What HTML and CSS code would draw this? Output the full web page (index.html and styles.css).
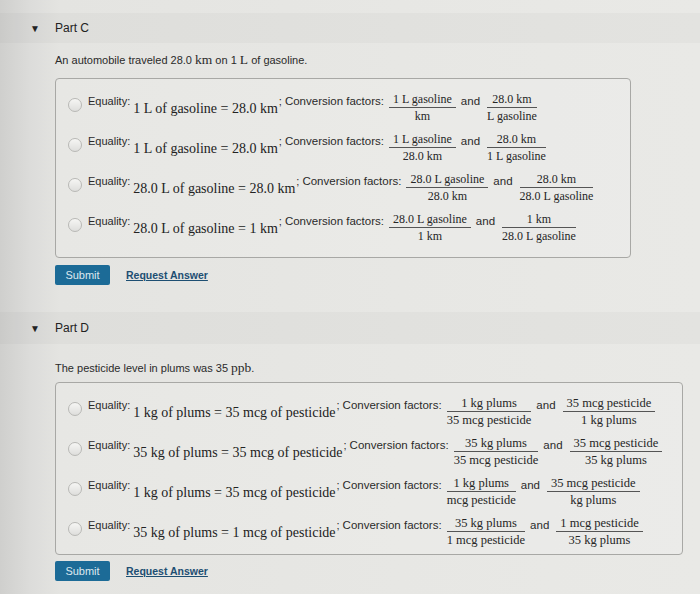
FILE: index.html
```html
<!DOCTYPE html>
<html>
<head>
<meta charset="utf-8">
<link rel="stylesheet" href="styles.css">
</head>
<body>
<div class="page">
  <div class="part-head"><span class="caret">&#9660;</span><span class="part-title">Part C</span></div>
  <p class="prompt">An automobile traveled 28.0 <span class="m">km</span> on 1 <span class="m">L</span> of gasoline.</p>
  <div class="box box-c">
    <div class="row">
      <span class="radio"></span><span class="lbl">Equality:</span><span class="math">1 L of gasoline = 28.0 km</span><span class="semi">;</span><span class="lbl cf">Conversion factors:</span>
      <span class="frac"><span class="num">1 L gasoline</span><span class="den">km</span></span><span class="and">and</span>
      <span class="frac"><span class="num">28.0 km</span><span class="den">L gasoline</span></span>
    </div>
    <div class="row">
      <span class="radio"></span><span class="lbl">Equality:</span><span class="math">1 L of gasoline = 28.0 km</span><span class="semi">;</span><span class="lbl cf">Conversion factors:</span>
      <span class="frac"><span class="num">1 L gasoline</span><span class="den">28.0 km</span></span><span class="and">and</span>
      <span class="frac"><span class="num">28.0 km</span><span class="den">1 L gasoline</span></span>
    </div>
    <div class="row">
      <span class="radio"></span><span class="lbl">Equality:</span><span class="math">28.0 L of gasoline = 28.0 km</span><span class="semi">;</span><span class="lbl cf">Conversion factors:</span>
      <span class="frac"><span class="num">28.0 L gasoline</span><span class="den">28.0 km</span></span><span class="and">and</span>
      <span class="frac"><span class="num">28.0 km</span><span class="den">28.0 L gasoline</span></span>
    </div>
    <div class="row">
      <span class="radio"></span><span class="lbl">Equality:</span><span class="math">28.0 L of gasoline = 1 km</span><span class="semi">;</span><span class="lbl cf">Conversion factors:</span>
      <span class="frac"><span class="num">28.0 L gasoline</span><span class="den">1 km</span></span><span class="and">and</span>
      <span class="frac"><span class="num">1 km</span><span class="den">28.0 L gasoline</span></span>
    </div>
  </div>
  <div class="actions"><span class="btn">Submit</span><span class="link">Request Answer</span></div>

  <div class="part-head part-d"><span class="caret">&#9660;</span><span class="part-title">Part D</span></div>
  <p class="prompt prompt-d">The pesticide level in plums was 35 <span class="m">ppb</span>.</p>
  <div class="box box-d">
    <div class="row">
      <span class="radio"></span><span class="lbl">Equality:</span><span class="math">1 kg of plums = 35 mcg of pesticide</span><span class="semi">;</span><span class="lbl cf">Conversion factors:</span>
      <span class="frac"><span class="num">1 kg plums</span><span class="den">35 mcg pesticide</span></span><span class="and">and</span>
      <span class="frac"><span class="num">35 mcg pesticide</span><span class="den">1 kg plums</span></span>
    </div>
    <div class="row">
      <span class="radio"></span><span class="lbl">Equality:</span><span class="math">35 kg of plums = 35 mcg of pesticide</span><span class="semi">;</span><span class="lbl cf">Conversion factors:</span>
      <span class="frac"><span class="num">35 kg plums</span><span class="den">35 mcg pesticide</span></span><span class="and">and</span>
      <span class="frac"><span class="num">35 mcg pesticide</span><span class="den">35 kg plums</span></span>
    </div>
    <div class="row">
      <span class="radio"></span><span class="lbl">Equality:</span><span class="math">1 kg of plums = 35 mcg of pesticide</span><span class="semi">;</span><span class="lbl cf">Conversion factors:</span>
      <span class="frac"><span class="num">1 kg plums</span><span class="den">mcg pesticide</span></span><span class="and">and</span>
      <span class="frac"><span class="num">35 mcg pesticide</span><span class="den">kg plums</span></span>
    </div>
    <div class="row">
      <span class="radio"></span><span class="lbl">Equality:</span><span class="math">35 kg of plums = 1 mcg of pesticide</span><span class="semi">;</span><span class="lbl cf">Conversion factors:</span>
      <span class="frac"><span class="num">35 kg plums</span><span class="den">1 mcg pesticide</span></span><span class="and">and</span>
      <span class="frac"><span class="num">1 mcg pesticide</span><span class="den">35 kg plums</span></span>
    </div>
  </div>
  <div class="actions actions-d"><span class="btn">Submit</span><span class="link">Request Answer</span></div>
</div>
</body>
</html>
```
FILE: styles.css
```css
html, body {
  margin: 0;
  padding: 0;
}
body {
  width: 700px;
  height: 594px;
  overflow: hidden;
  background: linear-gradient(to right, #cfcfcd 0px, #dcdcda 30px, #e4e4e1 60px, #e7e7e4 400px, #e9e9e6 700px);
  font-family: "Liberation Sans", Arial, sans-serif;
  color: #2b2b2b;
}
.page {
  padding-top: 13px;
}
.part-head {
  height: 30px;
  display: flex;
  align-items: center;
  padding-left: 30px;
  background: rgba(0, 0, 0, 0.025);
}
.caret {
  font-size: 10px;
  color: #222;
  width: 25px;
}
.part-title {
  font-size: 12px;
  color: #222;
}
.prompt {
  margin: 9px 0 0 55px;
  font-size: 11px;
  line-height: 16px;
  color: #2a2a2a;
}
.m {
  font-family: "Liberation Serif", "Times New Roman", serif;
  font-size: 13.5px;
}
.box {
  margin: 10px 0 0 55px;
  border: 1px solid #a8a8a5;
  border-radius: 4px;
  background: rgba(255, 255, 255, 0.12);
  box-sizing: border-box;
  padding: 8px 0 10px 12px;
}
.box-c {
  width: 576px;
  height: 180px;
}
.box-d {
  width: 628px;
  height: 173px;
  margin-top: 6px;
  padding-top: 8px;
}
.row {
  height: 40px;
  display: flex;
  align-items: center;
  white-space: nowrap;
}
.radio {
  width: 12px;
  height: 12px;
  border: 1px solid #b8b8b5;
  border-radius: 50%;
  background: linear-gradient(#f6f6f4, #dededc);
  margin-right: 6px;
  margin-bottom: 4px;
}
.lbl {
  font-size: 11px;
  color: #2a2a2a;
  margin-bottom: 13px;
}
.math {
  font-family: "Liberation Serif", "Times New Roman", serif;
  font-size: 14px;
  margin-left: 3px;
  margin-top: 3px;
  color: #222;
}
.semi {
  font-size: 11px;
  margin-bottom: 12px;
  margin-left: 1px;
  margin-right: 3px;
}
.cf {
  font-size: 11.5px;
}
.frac {
  display: inline-flex;
  flex-direction: column;
  align-items: center;
  font-family: "Liberation Serif", "Times New Roman", serif;
  font-size: 12px;
  color: #262626;
  margin-left: 5px;
}
.num {
  line-height: 14px;
  padding: 0 4px 1px;
  border-bottom: 1px solid #555;
  align-self: stretch;
  text-align: center;
}
.den {
  line-height: 14px;
  padding-top: 1px;
}
.and {
  font-size: 11.5px;
  margin: 0 2px 13px 5px;
}
.actions {
  margin: 7px 0 0 55px;
  display: flex;
  align-items: center;
}
.btn {
  width: 55px;
  height: 20px;
  background: #1c6b97;
  border-radius: 2px;
  color: #dce8ef;
  font-size: 11px;
  display: flex;
  align-items: center;
  justify-content: center;
}
.link {
  margin-left: 16px;
  font-size: 10.5px;
  font-weight: bold;
  color: #1d4e72;
  text-decoration: underline;
}
.part-d {
  margin-top: 27px;
  height: 32px;
}
.prompt-d {
  margin-top: 16px;
}
.box-d .math {
  font-size: 14px;
}
.box-d .frac {
  font-size: 12.5px;
}
.actions-d {
  margin-top: 6px;
}
```
